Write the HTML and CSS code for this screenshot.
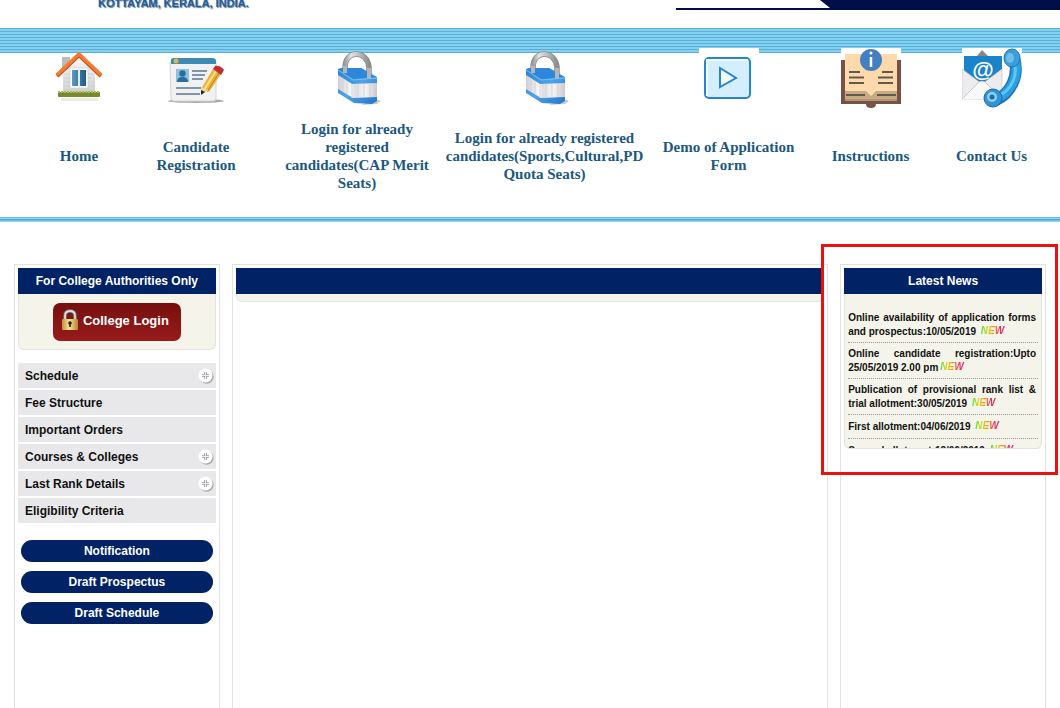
FILE: index.html
```html
<!DOCTYPE html>
<html lang="en">
<head>
<meta charset="utf-8">
<title>Candidate Portal</title>
<meta name="viewport" content="width=device-width, initial-scale=1">
<link rel="stylesheet" href="styles.css">
</head>
<body>
<svg class="defs" aria-hidden="true">
  <defs>
    <linearGradient id="shackle" x1="0" x2="1"><stop offset="0" stop-color="#9b9b9b"/><stop offset=".25" stop-color="#e4e4e4"/><stop offset=".6" stop-color="#bdbdbd"/><stop offset="1" stop-color="#8c8c8c"/></linearGradient>
    <linearGradient id="steel" x1="0" x2="1"><stop offset="0" stop-color="#cfcfd3"/><stop offset=".36" stop-color="#fbfbfb"/><stop offset=".42" stop-color="#dedee2"/><stop offset=".7" stop-color="#f5f5f7"/><stop offset="1" stop-color="#cacace"/></linearGradient>
    <linearGradient id="azure" x1="0" y1="0" x2="1" y2="1"><stop offset="0" stop-color="#2b7fd0"/><stop offset=".5" stop-color="#4ea3ea"/><stop offset="1" stop-color="#2475c6"/></linearGradient>
    <linearGradient id="glass" x1="0" x2="1"><stop offset="0" stop-color="#5e9cc2"/><stop offset="1" stop-color="#1c5a88"/></linearGradient>
    <linearGradient id="wall" x1="0" y1="0" x2="0" y2="1"><stop offset="0" stop-color="#f7f7f7"/><stop offset="1" stop-color="#cfd1d4"/></linearGradient>
    <linearGradient id="brass" x1="0" x2="1"><stop offset="0" stop-color="#c3913a"/><stop offset=".45" stop-color="#f6e39b"/><stop offset="1" stop-color="#b98227"/></linearGradient>
    <symbol id="padlock" viewBox="0 0 60 60">
      <path d="M34 57 L50 56 L54 53 L48 51 Z" fill="#c8c8c8"/>
      <path d="M18 25 V20 C18 1 40 2 42 19 V30" fill="none" stroke="#8a8a8a" stroke-width="5.500"/>
      <path d="M18 25 V20 C18 1 40 2 42 19 V30" fill="none" stroke="url(#shackle)" stroke-width="4"/>
      <path d="M11 21 L14 20 H34 L50 29 V53 L45 56 L27 55 L11 45 Z" fill="url(#azure)"/>
      <path d="M11 22 L15 20 L34 20 L49 29 L27 31 Z" fill="#2f86db"/>
      <path d="M16 18 H20 V25 H16 Z M40 20 H44 V31 H40 Z" fill="#b5b5b5"/>
      <path d="M11 27 L25 36 L50 35 V49 L26 50 L11 41 Z" fill="url(#steel)"/>
      <path d="M16 31 V43 M20 33 V46 M25 36 V50 M31 36 V49 M37 36 V49 M43 36 V49" stroke="#d3d3d7" stroke-width="1"/>
      <path d="M11 22 L26 32 L50 30" fill="none" stroke="#79bff5" stroke-width="1"/>
    </symbol>
    <symbol id="plus" viewBox="0 0 16 16">
      <circle cx="8.700" cy="8.700" r="7" fill="#aaa"/>
      <circle cx="7.500" cy="7.500" r="7" fill="#fff"/>
      <path d="M7.500 4 V11 M4 7.500 H11" stroke="#999" stroke-width="2.600"/>
      <path d="M7.500 4 V11 M4 7.500 H11" stroke="#eee" stroke-width="1"/>
    </symbol>
  </defs>
</svg>

<div class="page">
  <header class="banner">
    <p class="banner-place">KOTTAYAM, KERALA, INDIA.</p>
    <div class="banner-shape"></div>
  </header>

  <nav class="topnav">
    <a href="#home">
      <svg class="icon" viewBox="0 0 60 60" aria-hidden="true">
        <path d="M12 50 H49 V53 H12 Z" fill="#ededed"/>
        <path d="M13 9 H21 V22 H13 Z" fill="#b9bbbe"/>
        <path d="M14 26 L30 9 L46 26 V46 H14 Z" fill="url(#wall)"/>
        <path d="M15 26 H46 M15 30 H46 M15 34 H46 M15 38 H46 M15 42 H46" stroke="#c4c6c9" stroke-width=".6"/>
        <rect x="21" y="20" width="18" height="20" fill="#fff" stroke="#c3c7cc" stroke-width=".6"/>
        <rect x="23" y="22" width="14" height="16" fill="url(#glass)"/>
        <path d="M30 21 V39" stroke="#e6edf2" stroke-width="2"/>
        <path d="M8 28 L30 7 L52 28" fill="none" stroke="#b94c16" stroke-width="4"/>
        <path d="M8 27 L30 6 L52 27" fill="none" stroke="#f57a32" stroke-width="3.500"/>
        <rect x="9" y="44" width="42" height="5" rx="1" fill="#75892d"/>
        <path d="M9 44 H51" stroke="#a9bc4c" stroke-width="2" stroke-dasharray="2 1"/>
      </svg>
      <span>Home</span>
    </a>
    <a href="#register">
      <svg class="icon" viewBox="0 0 60 60" aria-hidden="true">
        <ellipse cx="30" cy="53" rx="28" ry="2" fill="#aaa"/>
        <path d="M4 14 H50 V50 Q50 53 47 53 H8 Q5 53 5 50 Z" fill="#f0f1f3" stroke="#d0d2d5"/>
        <path d="M5 16 V12 Q5 10 8 10 H46 Q50 10 50 13 V16 Z" fill="#3d8ab4"/>
        <circle cx="10" cy="13" r="2.500" fill="#e5b445"/>
        <rect x="10" y="21" width="13" height="13" fill="#8fc2df"/>
        <circle cx="16.500" cy="25.500" r="3.200" fill="#286f9e"/>
        <path d="M11 34 Q11 29 16.500 29 T22 34 Z" fill="#286f9e"/>
        <path d="M26 23 H41 M26 27 H39 M26 31 H37 M10 40 H35 M10 46 H34" stroke="#60748e" stroke-width="1.500"/>
        <path d="M35 41 L47 21 L55 26 L43 44 Z" fill="#edb33d"/>
        <path d="M38 42 L50 23" stroke="#ffe084" stroke-width="2"/>
        <path d="M41 44 L53 25" stroke="#bd7c20" stroke-width="1"/>
        <path d="M47 21 L49 18 Q54 17 58 22 L55 27 Z" fill="#c02e36"/>
        <path d="M35 39 L35 46 L43 43 Z" fill="#efd0a1"/>
        <path d="M35 42 V47 L39 44 Z" fill="#222"/>
      </svg>
      <span>Candidate Registration</span>
    </a>
    <a href="#cap-login">
      <svg class="icon" aria-hidden="true"><use href="#padlock"/></svg>
      <span>Login for already registered candidates(CAP Merit Seats)</span>
    </a>
    <a href="#quota-login">
      <svg class="icon" aria-hidden="true"><use href="#padlock"/></svg>
      <span>Login for already registered candidates(Sports,Cultural,PD Quota Seats)</span>
    </a>
    <a href="#demo">
      <svg class="icon icon-solid" viewBox="0 0 60 60" aria-hidden="true">
        <rect x="6" y="10" width="45" height="40" rx="4" fill="#d3eefc" stroke="#2784cf" stroke-width="2"/>
        <path d="M8 48 V12 H49" fill="none" stroke="#f4fcff" stroke-width="2"/>
        <path d="M21 20 V39 L37 30 Z" fill="#f4fbff" stroke="#2784cf" stroke-width="2"/>
      </svg>
      <span>Demo of Application Form</span>
    </a>
    <a href="#instructions">
      <svg class="icon icon-solid" viewBox="0 0 60 60" aria-hidden="true">
        <path d="M0 12 H60 V56 H35 Q35 60 30 60 T25 56 H0 Z" fill="#785149"/>
        <path d="M4 6 H56 V53 H4 Z" fill="#fed9ab"/>
        <path d="M4 43 H25 L30 48 L35 43 H56 V53 H4 Z" fill="#c6aa82"/>
        <path d="M4 52 H56" stroke="#a28767"/>
        <path d="M8 24 H19 M41 24 H52 M8 29.500 H23 M37 29.500 H52 M8 35 H23 M37 35 H52 M5 47 H24 M36 47 H55" stroke="#62584f" stroke-width="1.800"/>
        <circle cx="30" cy="12" r="11" fill="#447fc1"/>
        <circle cx="30" cy="5" r="1.500" fill="#fff"/>
        <path d="M30 9 V19" stroke="#fff" stroke-width="2.500"/>
      </svg>
      <span>Instructions</span>
    </a>
    <a href="#contact">
      <svg class="icon icon-solid" viewBox="0 0 60 60" aria-hidden="true">
        <path d="M15 8 L20 2 L26 8 Z" fill="#888"/>
        <path d="M2 8 H40 V38 H2 Z" fill="#1b83ca"/>
        <text class="at-sign" x="21" y="29" text-anchor="middle">@</text>
        <path d="M0 21 L20 36 L40 21 V51 H0 Z" fill="#ececee" stroke="#c6c6ca" stroke-width=".7"/>
        <path d="M0 51 L17 34 Q20 32 23 34 L40 51" fill="#f9f9fa" stroke="#bdbdc1" stroke-width=".8"/>
        <path d="M52 10 C58 28 48 46 34 52" fill="none" stroke="#1a78c2" stroke-width="12"/>
        <path d="M53 10 C58 28 48 46 34 51" fill="none" stroke="#2f9fe2" stroke-width="9"/>
        <path d="M53 18 C55 31 47 43 38 47" fill="none" stroke="#5cc8f7" stroke-width="3"/>
        <ellipse cx="50" cy="10" rx="8" ry="9" fill="#3a9fdc" stroke="#1b73b6"/>
        <ellipse cx="48" cy="10" rx="4" ry="5" fill="#70bfe8"/>
        <ellipse cx="31" cy="50" rx="9" ry="9" fill="#2f93d4" stroke="#1768a8"/>
        <ellipse cx="30" cy="49" rx="5" ry="5" fill="#8fd0ef"/>
        <circle cx="30" cy="49" r="2.500" fill="#1a6cab"/>
      </svg>
      <span>Contact Us</span>
    </a>
  </nav>

  <main class="columns">
    <section class="column">
      <h2 class="panel-title">For College Authorities Only</h2>
      <div class="panel-body login-box">
        <a class="login" href="#college-login">
          <svg class="login-icon" viewBox="0 0 18 22" aria-hidden="true">
            <path d="M4 11 V7 Q4 2 9 2 T14 7 V11" fill="none" stroke="#777" stroke-width="3.500"/>
            <path d="M4 11 V7 Q4 2 9 2 T14 7 V11" fill="none" stroke="#ddd" stroke-width="1.800"/>
            <rect x="1" y="10" width="16" height="11" rx="1" fill="url(#brass)"/>
            <circle cx="9" cy="14" r="1.800" fill="#2d220e"/>
            <path d="M9 14 V18" stroke="#2d220e" stroke-width="1.600"/>
          </svg>
          College Login
        </a>
      </div>
      <ul class="menu">
        <li><a href="#schedule">Schedule<svg class="plus" aria-hidden="true"><use href="#plus"/></svg></a></li>
        <li><a href="#fees">Fee Structure</a></li>
        <li><a href="#orders">Important Orders</a></li>
        <li><a href="#courses">Courses &amp; Colleges<svg class="plus" aria-hidden="true"><use href="#plus"/></svg></a></li>
        <li><a href="#ranks">Last Rank Details<svg class="plus" aria-hidden="true"><use href="#plus"/></svg></a></li>
        <li><a href="#eligibility">Eligibility Criteria</a></li>
      </ul>
      <div class="pills">
        <a href="#notification">Notification</a>
        <a href="#prospectus">Draft Prospectus</a>
        <a href="#draft-schedule">Draft Schedule</a>
      </div>
    </section>

    <section class="column">
      <div class="panel-title"></div>
      <div class="panel-body empty"></div>
    </section>

    <section class="column">
      <h2 class="panel-title">Latest News</h2>
      <div class="panel-body news">
        <ul>
          <li>Online availability of application forms and prospectus:10/05/2019 <b class="new">NEW</b></li>
          <li>Online candidate registration:Upto 25/05/2019 2.00 pm<b class="new">NEW</b></li>
          <li>Publication of provisional rank list &amp; trial allotment:30/05/2019 <b class="new">NEW</b></li>
          <li class="single">First allotment:04/06/2019 <b class="new">NEW</b></li>
          <li class="single">Second allotment:12/06/2019 <b class="new">NEW</b></li>
        </ul>
      </div>
    </section>
  </main>
  <div class="highlight"></div>
</div>
</body>
</html>
```
FILE: styles.css
```css
* {
  box-sizing: border-box;
}

body {
  margin: 0;
  background: #fff;
  font-family: "Liberation Sans", Arial, sans-serif;
  font-size: 12px;
  font-weight: bold;
}

a {
  color: inherit;
  text-decoration: none;
}

ul {
  margin: 0;
  padding: 0;
  list-style: none;
}

.defs {
  position: absolute;
  width: 0;
  height: 0;
}

.page {
  position: relative;
  display: flex;
  flex-direction: column;
  min-height: 100vh;
}

.banner {
  display: flex;
  justify-content: space-between;
  align-items: flex-start;
  height: 28px;
  padding-left: 98px;
  overflow: hidden;
}

.banner-place {
  margin: -4px 0 0;
  font-size: 11px;
  line-height: 14px;
  color: #1c5f9f;
  text-shadow: 1px 1px 1px #5a7590;
}

.banner-shape {
  width: 384px;
  height: 10px;
  background: #000f4a;
  clip-path: polygon(0 8px, 154px 8px, 144px 0, 100% 0, 100% 100%, 0 100%);
}

.topnav {
  display: grid;
  grid-template-columns: 84fr 150fr 172fr 203fr 165fr 119fr 123fr;
  padding: 20px 7px 19px 37px;
  background:
    repeating-linear-gradient(#58b0d8 0 1px, #83d0f0 1px 3px) top / 100% 25px no-repeat,
    repeating-linear-gradient(#67c0e6 0 1px, #8fd4f2 1px 2px, #4fa9d2 2px 3px) bottom / 100% 5px no-repeat;
}

.topnav a {
  display: flex;
  flex-direction: column;
  align-items: center;
  padding: 0 2px;
  color: #1b5880;
  font-family: "Liberation Serif", "Times New Roman", serif;
  font-size: 15px;
  line-height: 18px;
  text-align: center;
}

.topnav span {
  display: flex;
  align-items: center;
  min-height: 95px;
}

.icon {
  width: 60px;
  height: 60px;
}

.icon-solid {
  background: #fff;
}

.at-sign {
  fill: #fff;
  font: bold 22px "Liberation Sans", Arial, sans-serif;
}

.columns {
  display: grid;
  flex: 1;
  grid-template-columns: 206fr 597fr 206fr;
  column-gap: 12px;
  padding: 42px 14px 0;
}

.column {
  min-width: 0;
  padding: 3px;
  border: 1px solid #e2e2e2;
  border-bottom: 0;
}

.panel-title {
  height: 26px;
  margin: 0;
  background: #012265;
  color: #fff;
  font-size: 12px;
  line-height: 26px;
  text-align: center;
}

.panel-body {
  border: 1px solid #e3e3df;
  border-top: 0;
  border-radius: 0 0 6px 6px;
  background: #f4f4ea;
}

.empty {
  height: 8px;
}

.login-box {
  padding: 9px 9px 8px;
}

.login {
  display: flex;
  align-items: center;
  gap: 4px;
  width: 128px;
  height: 38px;
  margin: 0 auto;
  padding: 0 8px 4px;
  border-radius: 7px;
  background: linear-gradient(#75100f, #981b1b);
  color: #fff;
  font-size: 13px;
  white-space: nowrap;
}

.login-icon {
  width: 18px;
  height: 22px;
}

.menu {
  display: grid;
  gap: 2px;
  margin-top: 13px;
}

.menu a {
  display: flex;
  align-items: center;
  justify-content: space-between;
  height: 25px;
  padding: 0 2px 0 7px;
  background: #e8e8ea;
  color: #111;
}

.plus {
  width: 16px;
  height: 16px;
}

.pills {
  display: grid;
  gap: 9px;
  margin: 17px 3px 0;
}

.pills a {
  border-radius: 11px;
  background: #012265;
  color: #fff;
  line-height: 22px;
  text-align: center;
}

.news {
  height: 155px;
  padding: 13px 3px 0;
  overflow: hidden;
}

.news li {
  padding: 4px 2px 3px 0;
  border-bottom: 1px dotted #999;
  color: #111;
  font-size: 10px;
  line-height: 14px;
  text-align: justify;
}

.news .single {
  padding: 5px 0 4px;
}

.new {
  display: inline-block;
  margin-left: 2px;
  padding-right: 2px;
  background: linear-gradient(90deg, #4fe02a, #e8d820 30%, #ee7a25 55%, #e8206a 80%);
  background-clip: text;
  color: transparent;
  font-size: 10px;
  font-style: italic;
  line-height: 10px;
  vertical-align: 1px;
}

.highlight {
  position: absolute;
  top: 244px;
  right: 2px;
  width: 237px;
  height: 231px;
  border: 3px solid #ee0f0f;
  pointer-events: none;
}
```
